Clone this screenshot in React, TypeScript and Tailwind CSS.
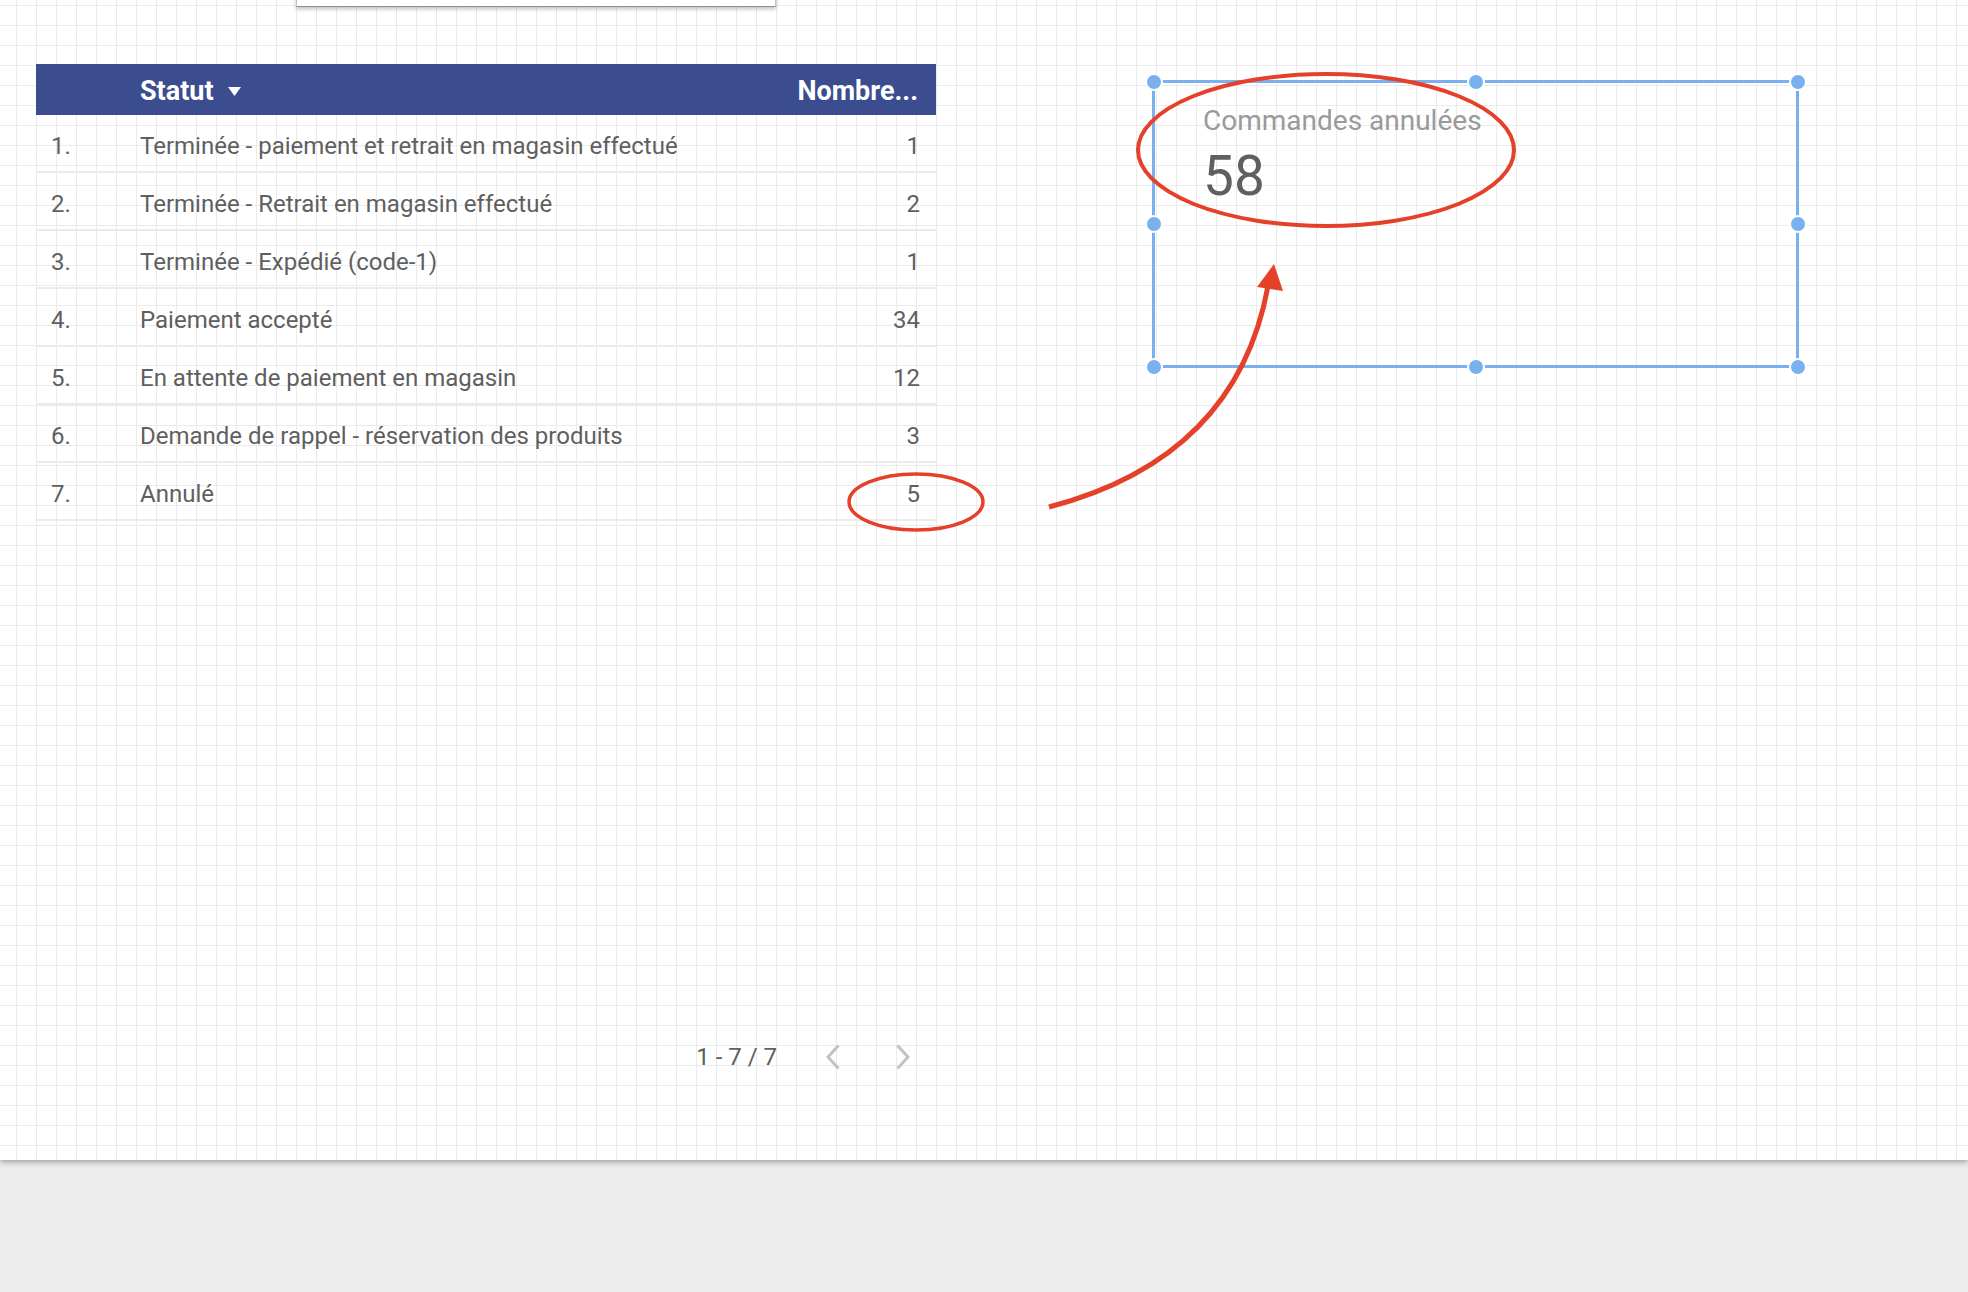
const rows = [
  { label: "Terminée - paiement et retrait en magasin effectué", value: 1 },
  { label: "Terminée - Retrait en magasin effectué", value: 2 },
  { label: "Terminée - Expédié (code-1)", value: 1 },
  { label: "Paiement accepté", value: 34 },
  { label: "En attente de paiement en magasin", value: 12 },
  { label: "Demande de rappel - réservation des produits", value: 3 },
  { label: "Annulé", value: 5 },
];

function Handle({ className }: { className: string }) {
  return (
    <div
      className={`absolute w-[14px] h-[14px] rounded-full bg-[#79b0ee] shadow-[0_0_0_2px_white] ${className}`}
    />
  );
}

export default function App() {
  return (
    <div className="w-[1968px] h-[1292px] bg-[#ededed] overflow-hidden font-['Roboto','Liberation_Sans',sans-serif]">
      <div className="relative h-[1160px] bg-white bg-[linear-gradient(to_right,#ebebeb_1.5px,transparent_1.5px),linear-gradient(to_bottom,#ebebeb_1.5px,transparent_1.5px)] bg-[size:20px_20px] bg-[position:16px_5px] shadow-[0_2px_6px_rgba(0,0,0,0.35)]">
        {/* card peeking from above */}
        <div className="absolute left-[296px] top-[-12px] w-[480px] h-[19px] bg-white border border-[#c4c4c4] border-b-[#8f8f8f] shadow-[0_2px_4px_rgba(0,0,0,0.25)]" />

        {/* table widget */}
        <div className="absolute left-[36px] top-[64px] w-[900px] h-[1013px] flex flex-col">
          <div className="h-[51px] pt-[3px] bg-[#3b4c8f] flex items-center text-white text-[27px] font-bold">
            <div className="w-[104px]" />
            <div className="flex-1 flex items-center gap-[14px]">
              <span>Statut</span>
              <svg width="13" height="9" viewBox="0 0 13 9">
                <path d="M0 0 L13 0 L6.5 9 Z" fill="white" />
              </svg>
            </div>
            <div className="pr-[18px]">Nombre...</div>
          </div>
          {rows.map((r, i) => (
            <div
              key={r.label}
              className="h-[58px] flex items-center pt-[5px] border-b-2 border-[#ebebeb] text-[24px] text-[#5f5f5f]"
            >
              <div className="w-[104px] pl-[15px]">{i + 1}.</div>
              <div className="flex-1">{r.label}</div>
              <div className="pr-[16px]">{r.value}</div>
            </div>
          ))}
          <div className="flex-1" />
          <div className="h-[40px] flex items-center justify-end pr-[26px] text-[24px] text-[#5f5f5f]">
            <span className="mr-[49px]">1 - 7 / 7</span>
            <svg width="14" height="26" viewBox="0 0 14 26">
              <path d="M12.5 1.5 L2 13 L12.5 24.5" fill="none" stroke="#c2c2c2" strokeWidth="3" />
            </svg>
            <svg width="14" height="26" viewBox="0 0 14 26" className="ml-[56px]">
              <path d="M1.5 1.5 L12 13 L1.5 24.5" fill="none" stroke="#c2c2c2" strokeWidth="3" />
            </svg>
          </div>
        </div>

        {/* selected scorecard */}
        <div className="absolute left-[1152px] top-[80px] w-[647px] h-[288px] border-[3px] border-[#79b0ee]">
          <div className="pl-[48px] pt-[18px] flex flex-col">
            <span className="text-[28px] leading-[40px] text-[#9a9a9a]">Commandes annulées</span>
            <span className="text-[55px] leading-[64px] text-[#5f5f5f] mt-[3px]">58</span>
          </div>
          <Handle className="left-[-8.5px] top-[-8.5px]" />
          <Handle className="left-1/2 -translate-x-1/2 top-[-8.5px]" />
          <Handle className="right-[-8.5px] top-[-8.5px]" />
          <Handle className="left-[-8.5px] top-1/2 -translate-y-1/2" />
          <Handle className="right-[-8.5px] top-1/2 -translate-y-1/2" />
          <Handle className="left-[-8.5px] bottom-[-8.5px]" />
          <Handle className="left-1/2 -translate-x-1/2 bottom-[-8.5px]" />
          <Handle className="right-[-8.5px] bottom-[-8.5px]" />
        </div>

        {/* annotations */}
        <svg className="absolute left-0 top-0 pointer-events-none" width="1968" height="1160">
          <ellipse cx="1326" cy="150" rx="188" ry="76" fill="none" stroke="#e5412a" strokeWidth="4" />
          <ellipse cx="916" cy="502" rx="67" ry="28" fill="none" stroke="#e5412a" strokeWidth="3.5" />
          <path d="M1049 507 C1160 478 1245 412 1268 286" fill="none" stroke="#e5412a" strokeWidth="5" />
          <path d="M1274 264 L1257 287 L1283 291 Z" fill="#e5412a" />
        </svg>
      </div>
    </div>
  );
}
